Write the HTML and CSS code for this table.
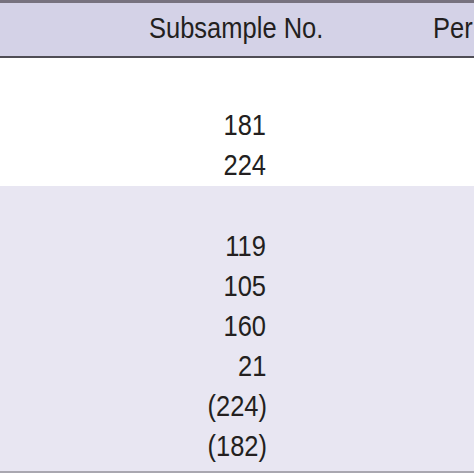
FILE: index.html
```html
<!DOCTYPE html>
<html>
<head>
<meta charset="utf-8">
<link rel="stylesheet" href="styles.css">
</head>
<body>
<div class="table">
  <div class="head">
    <div class="cell c1"></div>
    <div class="cell c2 h"><span class="t tl">Subsample No.</span></div>
    <div class="cell c3 h"><span class="t tl">Per</span></div>
  </div>
  <div class="section white">
    <div class="row"><div class="cell c1"></div><div class="cell c2 num"></div></div>
    <div class="row"><div class="cell c1"></div><div class="cell c2 num"><span class="t tr">181</span></div></div>
    <div class="row"><div class="cell c1"></div><div class="cell c2 num"><span class="t tr">224</span></div></div>
  </div>
  <div class="section tint">
    <div class="row"><div class="cell c1"></div><div class="cell c2 num"></div></div>
    <div class="row"><div class="cell c1"></div><div class="cell c2 num"><span class="t tr">119</span></div></div>
    <div class="row"><div class="cell c1"></div><div class="cell c2 num"><span class="t tr">105</span></div></div>
    <div class="row"><div class="cell c1"></div><div class="cell c2 num"><span class="t tr">160</span></div></div>
    <div class="row"><div class="cell c1"></div><div class="cell c2 num"><span class="t tr">21</span></div></div>
    <div class="row"><div class="cell c1"></div><div class="cell c2 num paren"><span class="t tr">(224)</span></div></div>
    <div class="row"><div class="cell c1"></div><div class="cell c2 num paren"><span class="t tr">(182)</span></div></div>
  </div>
</div>
</body>
</html>
```
FILE: styles.css
```css
html, body {
  margin: 0;
  padding: 0;
  width: 474px;
  height: 474px;
  overflow: hidden;
  background: #ffffff;
}
.table {
  width: 700px;
  font-family: "Liberation Sans", Arial, sans-serif;
  color: #231f20;
  font-size: 30px;
}
.t {
  display: inline-block;
  white-space: nowrap;
  transform: scaleX(0.85);
}
.tl { transform-origin: left center; }
.tr { transform-origin: right center; }
.head {
  display: flex;
  height: 53px;
  align-items: center;
  background: #d4d2e7;
  border-top: 3px solid #77727f;
  border-bottom: 2px solid #4f4d55;
}
.cell { flex: none; white-space: nowrap; }
.c1 { width: 140px; }
.c2 { width: 200px; }
.c3 { width: 300px; }
.h { padding-bottom: 3px; box-sizing: border-box; }
.h.c2 { padding-left: 9px; }
.h.c3 { padding-left: 93px; }
.section.white {
  background: #ffffff;
  padding-top: 7px;
  padding-bottom: 1px;
}
.section.tint {
  background: #e8e6f2;
  padding-bottom: 5px;
  border-bottom: 2px solid #a9a7b0;
}
.row {
  display: flex;
  height: 40px;
  align-items: center;
}
.num {
  text-align: right;
  padding-right: 74px;
  box-sizing: border-box;
}
.paren { padding-right: 73px; }
```
